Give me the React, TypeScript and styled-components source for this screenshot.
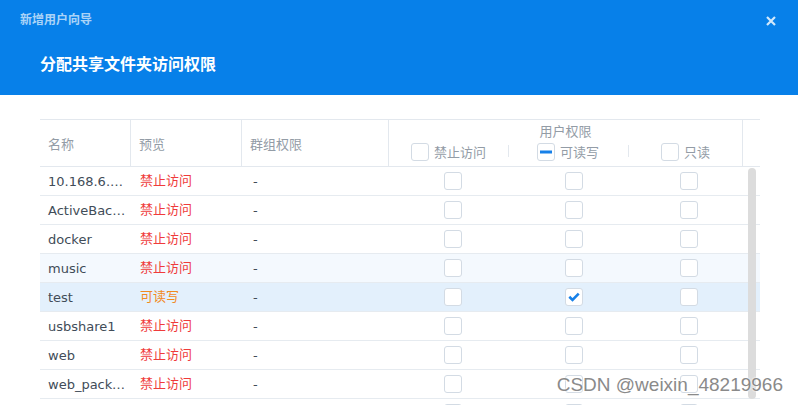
import React from 'react';
import styled, { createGlobalStyle } from 'styled-components';

const GlobalStyle = createGlobalStyle`
  html, body {
    margin: 0;
    padding: 0;
    background: #ffffff;
  }
  body {
    font-family: 'DejaVu Sans', 'Noto Sans CJK SC', sans-serif;
    overflow: hidden;
  }
  * {
    box-sizing: border-box;
  }
`;

const Dialog = styled.div`
  position: relative;
  width: 798px;
  height: 405px;
  overflow: hidden;
  background: #fff;
`;

const Header = styled.header`
  position: relative;
  height: 95px;
  background: #0780e9;
  padding: 11px 20px 0;
`;

const WizardName = styled.div`
  font-family: 'Noto Sans CJK SC', sans-serif;
  font-size: 12px;
  font-weight: bold;
  line-height: 16px;
  color: rgba(255, 255, 255, 0.68);
`;

const StepTitle = styled.h1`
  margin: 24px 0 0 20px;
  font-family: 'Noto Sans CJK SC', sans-serif;
  font-size: 16px;
  font-weight: bold;
  line-height: 24px;
  color: #fff;
`;

const CloseButton = styled.button`
  position: absolute;
  top: 14px;
  right: 20px;
  width: 14px;
  height: 14px;
  padding: 0;
  border: none;
  background: transparent;
  display: flex;
  align-items: center;
  justify-content: center;
  cursor: pointer;
`;

const Content = styled.div`
  position: relative;
  padding: 24px 0 0 40px;
`;

const Table = styled.div`
  width: 720px;
  font-size: 13px;
`;

const HeadRow = styled.div`
  display: grid;
  grid-template-columns: 91px 111px 147px 354px 17px;
  height: 48px;
  border-top: 1px solid #e3e8ee;
  border-bottom: 1px solid #e3e8ee;
`;

const HeadCell = styled.div<{ $last?: boolean }>`
  display: flex;
  align-items: center;
  padding: 1px 8px 0;
  font-family: 'Noto Sans CJK SC', sans-serif;
  color: #939ca6;
  border-right: ${(p) => (p.$last ? 'none' : '1px solid #e3e8ee')};
`;

const PermHead = styled.div`
  display: flex;
  flex-direction: column;
  border-right: 1px solid #e3e8ee;
  font-family: 'Noto Sans CJK SC', sans-serif;
  color: #939ca6;
`;

const PermTitle = styled.div`
  text-align: center;
  line-height: 18px;
  padding-top: 2px;
`;

const PermOptions = styled.div`
  display: grid;
  grid-template-columns: 119px 120px 115px;
  height: 23px;
  align-items: center;
`;

const PermOption = styled.label<{ $divider?: boolean }>`
  position: relative;
  display: flex;
  align-items: center;
  justify-content: center;
  gap: 5px;
  height: 100%;
  &::before {
    content: '';
    display: ${(p) => (p.$divider ? 'block' : 'none')};
    position: absolute;
    left: 0;
    top: 5px;
    height: 12px;
    border-left: 1px solid #e3e8ee;
  }
`;

const Body = styled.div`
  position: relative;
`;

const Row = styled.div<{ $state?: 'hover' | 'selected' }>`
  display: grid;
  grid-template-columns: 91px 111px 147px 128px 114px 116px 13px;
  height: 29px;
  align-items: center;
  border-bottom: 1px solid #e6ebf0;
  background: ${(p) =>
    p.$state === 'selected' ? '#e3f0fc' : p.$state === 'hover' ? '#f4f9fe' : '#fff'};
`;

const NameCell = styled.div`
  padding: 0 1px 0 8px;
  color: #414c58;
  white-space: nowrap;
  overflow: hidden;
  text-overflow: ellipsis;
`;

const PreviewCell = styled.div<{ $tone: 'deny' | 'rw' }>`
  padding: 0 9px 3px;
  line-height: 18px;
  font-family: 'Noto Sans CJK SC', sans-serif;
  color: ${(p) => (p.$tone === 'rw' ? '#f28a1e' : '#ef3b3b')};
`;

const GroupCell = styled.div`
  padding: 0 11px;
  color: #414c58;
`;

const BoxCell = styled.div`
  display: flex;
  justify-content: center;
`;

const Box = styled.span`
  display: inline-flex;
  align-items: center;
  justify-content: center;
  width: 18px;
  height: 18px;
  border: 1px solid #d3dbe4;
  border-radius: 3px;
  background: #fff;
`;

const Scrollbar = styled.div`
  position: absolute;
  top: 1px;
  left: 708px;
  width: 8px;
  height: 231px;
  border-radius: 4px;
  background: #dcdcdc;
`;

const Watermark = styled.div`
  position: absolute;
  right: 15px;
  bottom: 9px;
  font-family: 'Liberation Sans', sans-serif;
  font-size: 19px;
  color: #8a8a8a;
  text-shadow: 0 0 2px #fff, 0 0 2px #fff;
  pointer-events: none;
`;

type Perm = 'deny' | 'rw';

const shares: { name: string; perm: Perm; state?: 'hover' | 'selected' }[] = [
  { name: '10.168.6.100', perm: 'deny' },
  { name: 'ActiveBackupforBusiness', perm: 'deny' },
  { name: 'docker', perm: 'deny' },
  { name: 'music', perm: 'deny', state: 'hover' },
  { name: 'test', perm: 'rw', state: 'selected' },
  { name: 'usbshare1', perm: 'deny' },
  { name: 'web', perm: 'deny' },
  { name: 'web_packages', perm: 'deny' },
  { name: 'homes', perm: 'deny' },
];

const Check = () => (
  <svg width="12" height="10" viewBox="0 0 12 10">
    <path d="M1.3 4.8 L4.5 7.9 L10.7 1.6" fill="none" stroke="#1780e8" strokeWidth="2.6" />
  </svg>
);

const Minus = () => (
  <svg width="12" height="4" viewBox="0 0 12 4">
    <rect x="0" y="0.5" width="12" height="3" fill="#1780e8" />
  </svg>
);

export default function App() {
  return (
    <Dialog>
      <GlobalStyle />
      <Header>
        <WizardName>新增用户向导</WizardName>
        <StepTitle>分配共享文件夹访问权限</StepTitle>
        <CloseButton aria-label="close">
          <svg width="10" height="10" viewBox="0 0 10 10">
            <path d="M1 1 L9 9 M9 1 L1 9" stroke="rgba(255,255,255,0.82)" strokeWidth="2.2" />
          </svg>
        </CloseButton>
      </Header>
      <Content>
        <Table>
          <HeadRow>
            <HeadCell>名称</HeadCell>
            <HeadCell>预览</HeadCell>
            <HeadCell>群组权限</HeadCell>
            <PermHead>
              <PermTitle>用户权限</PermTitle>
              <PermOptions>
                <PermOption>
                  <Box />
                  禁止访问
                </PermOption>
                <PermOption $divider>
                  <Box>
                    <Minus />
                  </Box>
                  可读写
                </PermOption>
                <PermOption $divider>
                  <Box />
                  只读
                </PermOption>
              </PermOptions>
            </PermHead>
            <HeadCell $last />
          </HeadRow>
          <Body>
            {shares.map((s) => (
              <Row key={s.name} $state={s.state}>
                <NameCell>{s.name}</NameCell>
                <PreviewCell $tone={s.perm}>{s.perm === 'rw' ? '可读写' : '禁止访问'}</PreviewCell>
                <GroupCell>-</GroupCell>
                <BoxCell>
                  <Box />
                </BoxCell>
                <BoxCell>
                  <Box>{s.perm === 'rw' && <Check />}</Box>
                </BoxCell>
                <BoxCell>
                  <Box />
                </BoxCell>
                <div />
              </Row>
            ))}
            <Scrollbar />
          </Body>
        </Table>
      </Content>
      <Watermark>CSDN @weixin_48219966</Watermark>
    </Dialog>
  );
}
